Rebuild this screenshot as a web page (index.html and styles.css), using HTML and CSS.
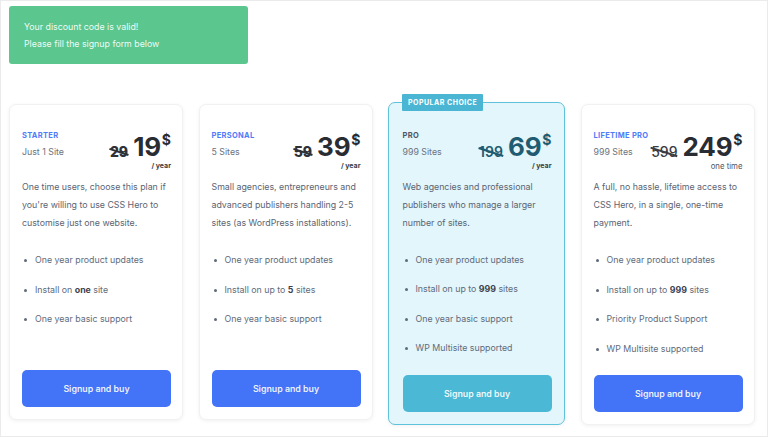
FILE: index.html
```html
<!DOCTYPE html>
<html>
<head>
<meta charset="utf-8">
<link rel="stylesheet" href="styles.css">
</head>
<body>
<div class="frame">
  <div class="alert">
    <p>Your discount code is valid!</p>
    <p>Please fill the signup form below</p>
  </div>
  <div class="plans">
    <div class="card">
      <div class="head">
        <div class="meta">
          <div class="name">Starter</div>
          <div class="sites">Just 1 Site</div>
        </div>
        <div class="price">
          <div class="amount"><span class="old">29</span><span class="num">19</span><span class="cur">$</span></div>
          <div class="period">/ year</div>
        </div>
      </div>
      <p class="desc">One time users, choose this plan if you're willing to use CSS Hero to customise just one website.</p>
      <ul class="features">
        <li>One year product updates</li>
        <li>Install on <b>one</b> site</li>
        <li>One year basic support</li>
      </ul>
      <a class="btn">Signup and buy</a>
    </div>
    <div class="card">
      <div class="head">
        <div class="meta">
          <div class="name">Personal</div>
          <div class="sites">5 Sites</div>
        </div>
        <div class="price">
          <div class="amount"><span class="old">59</span><span class="num">39</span><span class="cur">$</span></div>
          <div class="period">/ year</div>
        </div>
      </div>
      <p class="desc">Small agencies, entrepreneurs and advanced publishers handling 2-5 sites (as WordPress installations).</p>
      <ul class="features">
        <li>One year product updates</li>
        <li>Install on up to <b>5</b> sites</li>
        <li>One year basic support</li>
      </ul>
      <a class="btn">Signup and buy</a>
    </div>
    <div class="card popular">
      <div class="badge">Popular Choice</div>
      <div class="head">
        <div class="meta">
          <div class="name">Pro</div>
          <div class="sites">999 Sites</div>
        </div>
        <div class="price">
          <div class="amount"><span class="old">199</span><span class="num">69</span><span class="cur">$</span></div>
          <div class="period">/ year</div>
        </div>
      </div>
      <p class="desc">Web agencies and professional publishers who manage a larger number of sites.</p>
      <ul class="features">
        <li>One year product updates</li>
        <li>Install on up to <b>999</b> sites</li>
        <li>One year basic support</li>
        <li>WP Multisite supported</li>
      </ul>
      <a class="btn">Signup and buy</a>
    </div>
    <div class="card">
      <div class="head">
        <div class="meta">
          <div class="name">Lifetime Pro</div>
          <div class="sites">999 Sites</div>
        </div>
        <div class="price">
          <div class="amount"><span class="old light">599</span><span class="num">249</span><span class="cur">$</span></div>
          <div class="period light">one time</div>
        </div>
      </div>
      <p class="desc">A full, no hassle, lifetime access to CSS Hero, in a single, one-time payment.</p>
      <ul class="features">
        <li>One year product updates</li>
        <li>Install on up to <b>999</b> sites</li>
        <li>Priority Product Support</li>
        <li>WP Multisite supported</li>
      </ul>
      <a class="btn">Signup and buy</a>
    </div>
  </div>
</div>
</body>
</html>
```
FILE: styles.css
```css
* { box-sizing: border-box; }
html, body { margin: 0; padding: 0; background: #fff; }
body { font-family: Inter, "Noto Sans", sans-serif; color: #4b5563; }

.frame {
  width: 768px;
  height: 437px;
  border: 1px solid #ebebeb;
  padding: 5px 12px 0 8px;
}

.alert {
  width: 239px;
  height: 58px;
  background: #5bc78f;
  border-radius: 3px;
  padding: 12px 15px;
  color: rgba(255,255,255,0.92);
  font-size: 8.8px;
  line-height: 17px;
}
.alert p { margin: 0; }

.plans {
  display: flex;
  align-items: flex-start;
  gap: 15.5px;
  margin-top: 40px;
}

.card {
  position: relative;
  width: 174px;
  min-height: 316px;
  background: #fff;
  border: 1px solid #f1f1f3;
  border-radius: 7px;
  box-shadow: 0 1px 4px rgba(0,0,0,0.06);
  padding: 25px 11px 12px 12px;
  display: flex;
  flex-direction: column;
}

.popular {
  width: 177px;
  margin-top: -2px;
  min-height: 322px;
  background: #e3f6fb;
  border: 1.5px solid #5ec3da;
  padding: 26.5px 12.5px 12px 13.5px;
}

.badge {
  position: absolute;
  top: -9px;
  left: 13px;
  height: 17px;
  padding: 0 6px;
  background: #4bb6d4;
  color: #fff;
  font-size: 7px;
  font-weight: 700;
  letter-spacing: 0.5px;
  line-height: 17px;
  text-transform: uppercase;
  border-radius: 1px;
}

.head {
  display: flex;
  justify-content: space-between;
  height: 48px;
}

.name {
  font-size: 7.5px;
  font-weight: 700;
  letter-spacing: 0.3px;
  text-transform: uppercase;
  color: #4f7cf8;
  line-height: 12px;
}
.popular .name { color: #4b5563; }

.sites {
  font-size: 8.8px;
  line-height: 20px;
  color: #6b7280;
}

.price { text-align: right; padding-top: 3px; }
.amount {
  display: flex;
  align-items: flex-start;
  justify-content: flex-end;
  height: 28px;
}
.num {
  font-size: 26px;
  font-weight: 700;
  line-height: 28px;
  color: #2a2c33;
  letter-spacing: -0.2px;
}
.popular .num, .popular .cur { color: #1f5b71; }
.cur {
  font-size: 14px;
  font-weight: 700;
  line-height: 14px;
  color: #2a2c33;
  margin-left: 1px;
}
.old {
  position: relative;
  font-size: 14px;
  font-weight: 800;
  color: #2f3137;
  line-height: 14px;
  margin-top: 12px;
  margin-right: 5px;
}
.popular .old { color: #1f5b71; font-weight: 600; }
.old.light { font-weight: 500; color: #3a3c42; }
.old::after {
  content: "";
  position: absolute;
  left: -1px;
  right: -1px;
  top: 6px;
  height: 1.5px;
  background: currentColor;
  transform: rotate(18deg);
}
.period {
  font-size: 7px;
  font-weight: 700;
  line-height: 10px;
  color: #3b3f46;
}
.period.light { font-weight: 400; font-size: 7.8px; color: #50555e; }

.desc {
  margin: 0;
  font-size: 8.8px;
  line-height: 18px;
  color: #5b6473;
}

.features {
  list-style: none;
  margin: 13px 0 12px;
  padding: 0;
}
.features li {
  position: relative;
  height: 29.5px;
  line-height: 29.5px;
  padding-left: 13px;
  font-size: 8.8px;
  color: #5f6b7b;
}
.features li::before {
  content: "";
  position: absolute;
  left: 2px;
  top: 14px;
  width: 3px;
  height: 3px;
  border-radius: 50%;
  background: #5f6b7b;
}
.features b { font-weight: 700; color: #3c4250; }

.btn {
  display: block;
  margin-top: auto;
  height: 37px;
  line-height: 37px;
  text-align: center;
  background: #4373f6;
  color: rgba(255,255,255,0.92);
  font-size: 8.8px;
  font-weight: 600;
  border-radius: 5px;
}
.popular .btn { background: #4bb8d5; }
```
